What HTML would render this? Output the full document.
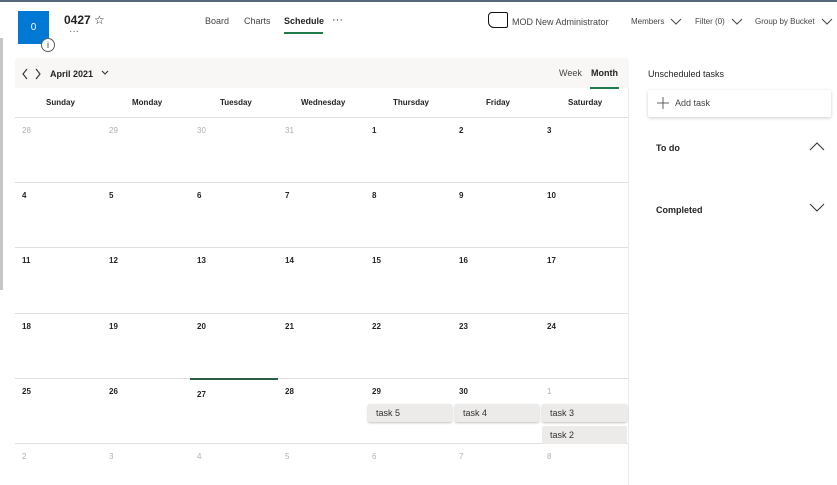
<!DOCTYPE html>
<html><head><style>
*{box-sizing:border-box;margin:0;padding:0}
body{width:837px;height:485px;overflow:hidden;background:#fff;font-family:"Liberation Sans",sans-serif;color:#252423;position:relative;font-size:9px}
.a{position:absolute;white-space:nowrap}
.b{font-weight:bold}
.g{color:#b3b0ad}
.hl{position:absolute;left:15px;width:614px;height:1px;background:#e1dfdd}
.task{position:absolute;height:18px;background:#edebe9;border-radius:2px;box-shadow:0 1px 2px rgba(0,0,0,.25);padding:4px 8px;font-size:9px;color:#323130}
</style></head><body>
<div class="a" style="left:0;top:0;width:837px;height:2px;background:#56667a"></div>
<div class="a" style="left:0;top:38px;width:3px;height:252px;background:#c8c6c4"></div>
<div class="a" style="left:18px;top:11px;width:31px;height:33px;background:#0078d4;color:#fff;font-size:10px;text-align:center;line-height:33px">0</div>
<div class="a" style="left:41px;top:38px;width:14px;height:14px;border:1px solid #605e5c;border-radius:50%;background:#fff;font-size:9px;text-align:center;line-height:12px;color:#444">i</div>
<div class="a b" style="left:64px;top:13px;font-size:12px">0427 <span style="font-weight:normal">☆</span></div>
<div class="a" style="left:69px;top:26px;font-size:10px;color:#605e5c">···</div>
<div class="a" style="left:205px;top:16px;color:#484644">Board</div>
<div class="a" style="left:244px;top:16px;color:#484644">Charts</div>
<div class="a b" style="left:284px;top:16px">Schedule</div>
<div class="a" style="left:284px;top:32px;width:39px;height:2px;background:#237b4b"></div>
<div class="a" style="left:332px;top:14px;font-size:11px">···</div>
<div class="a" style="left:488px;top:12px;width:20px;height:16px;border:1px solid #111;border-radius:4px 2px 2px 6px"></div>
<div class="a" style="left:512px;top:17px;color:#484644">MOD New Administrator</div>
<div class="a" style="left:631px;top:17px;color:#484644;font-size:8px">Members</div>
<div class="a" style="left:695px;top:17px;color:#484644;font-size:8px">Filter (0)</div>
<div class="a" style="left:755px;top:17px;color:#484644;font-size:8px">Group by Bucket</div>
<svg class="a" style="left:670px;top:17px" width="170" height="10"><g fill="none" stroke="#484644" stroke-width="1"><path d="M1 2l5 5 5-5"/><path d="M62 2l5 5 5-5"/><path d="M152 2l5 5 5-5"/></g></svg>

<div class="a" style="left:15px;top:58px;width:614px;height:30px;background:#f8f7f6;border-radius:3px 3px 0 0"></div>
<svg class="a" style="left:20px;top:67px" width="90" height="14"><g fill="none" stroke="#323130" stroke-width="1.1"><path d="M7 2l-4 5 4 5"/><path d="M16 2l4 5-4 5"/><path d="M82 4l3 3 3-3"/></g></svg>
<div class="a b" style="left:50px;top:69px">April 2021</div>
<div class="a" style="left:559px;top:68px;color:#484644">Week</div>
<div class="a b" style="left:591px;top:68px">Month</div>
<div class="a" style="left:590px;top:87px;width:29px;height:2px;background:#237b4b"></div>
<div class="a b" style="left:46px;top:98px;font-size:8px">Sunday</div>
<div class="a b" style="left:132px;top:98px;font-size:8px">Monday</div>
<div class="a b" style="left:220px;top:98px;font-size:8px">Tuesday</div>
<div class="a b" style="left:301px;top:98px;font-size:8px">Wednesday</div>
<div class="a b" style="left:393px;top:98px;font-size:8px">Thursday</div>
<div class="a b" style="left:486px;top:98px;font-size:8px">Friday</div>
<div class="a b" style="left:568px;top:98px;font-size:8px">Saturday</div>
<div class="hl" style="top:117px"></div><div class="hl" style="top:182px"></div><div class="hl" style="top:247px"></div><div class="hl" style="top:313px"></div><div class="hl" style="top:378px"></div><div class="hl" style="top:443px"></div>
<div class="a" style="left:628px;top:88px;width:1px;height:397px;background:#edebe9"></div>
<div class="a" style="left:190px;top:378px;width:88px;height:2px;background:#2c5e46"></div>
<div id="nums"></div>
<div class="task" style="left:368px;top:404px;width:84px">task 5</div>
<div class="task" style="left:455px;top:404px;width:84px">task 4</div>
<div class="task" style="left:542px;top:404px;width:85px">task 3</div>
<div class="task" style="left:542px;top:426px;width:85px;box-shadow:none">task 2</div>

<div class="a" style="left:648px;top:69px;font-size:9px">Unscheduled tasks</div>
<div class="a" style="left:648px;top:90px;width:183px;height:27px;background:#fff;box-shadow:0 1px 3px rgba(0,0,0,.2);border-radius:2px"></div>
<svg class="a" style="left:657px;top:97px" width="12" height="12"><path d="M6 0v12M0 6h12" stroke="#605e5c" stroke-width="1"/></svg>
<div class="a" style="left:675px;top:98px;color:#484644">Add task</div>
<div class="a b" style="left:656px;top:143px">To do</div>
<div class="a b" style="left:656px;top:205px">Completed</div>
<svg class="a" style="left:809px;top:142px" width="16" height="75"><g fill="none" stroke="#323130" stroke-width="1"><path d="M1 8l7-7 7 7"/><path d="M1 62l7 7 7-7"/></g></svg>
<script>
var rows=[[28,29,30,31,1,2,3],[4,5,6,7,8,9,10],[11,12,13,14,15,16,17],[18,19,20,21,22,23,24],[25,26,27,28,29,30,1],[2,3,4,5,6,7,8]];
var xs=[22,109,197,285,372,459,547],ys=[126,191,256,322,387,452],h='';
rows.forEach(function(r,i){r.forEach(function(n,j){var g=(i==0&&j<4)||(i==4&&j==6)||i==5;h+='<div class="a '+(g?'g':'b')+'" style="left:'+xs[j]+'px;top:'+(ys[i]+(i==4&&j==2?3:0))+'px;font-size:8px">'+n+'</div>';});});
document.getElementById('nums').innerHTML=h;
</script>
</body></html>
